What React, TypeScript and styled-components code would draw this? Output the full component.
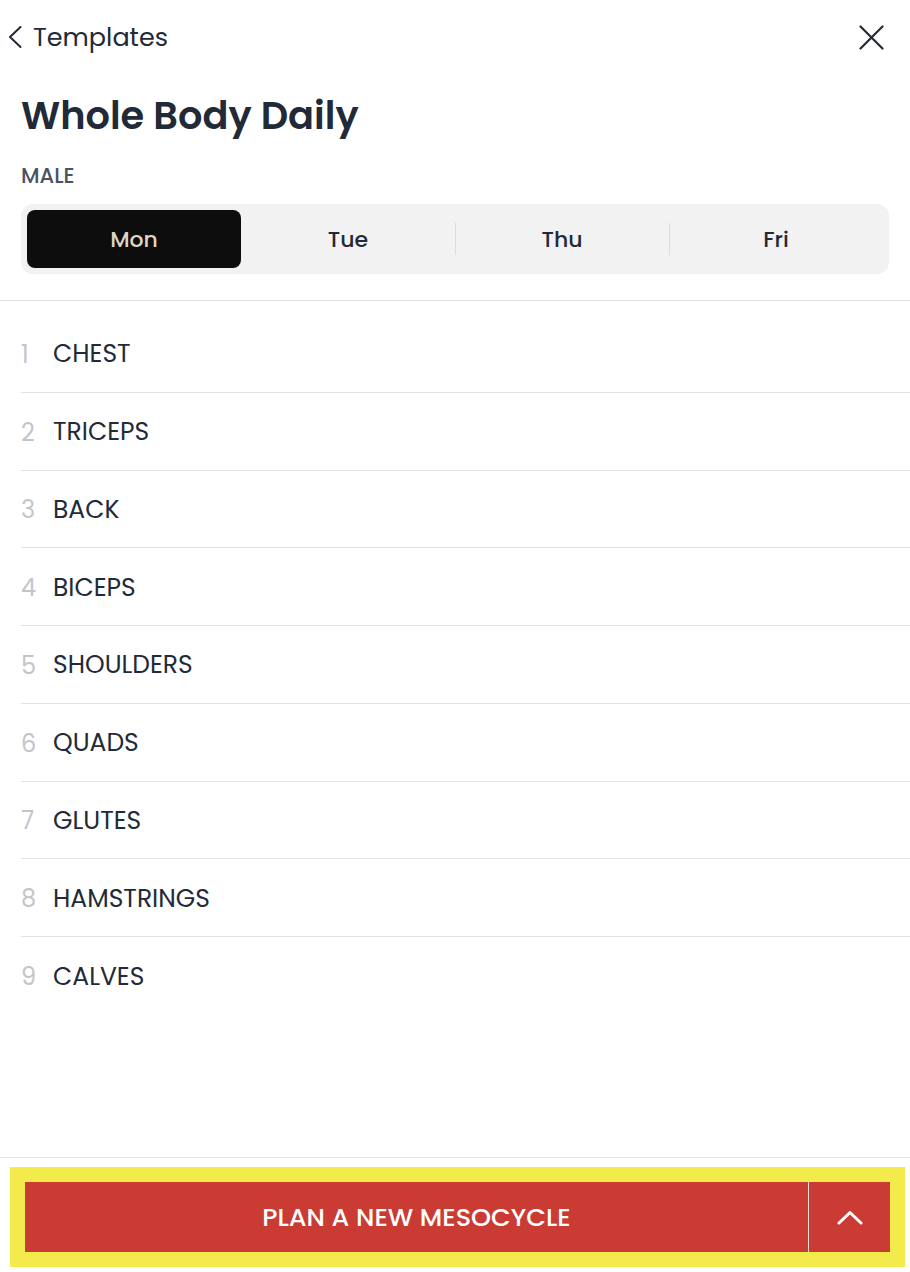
import React from 'react';
import styled, { createGlobalStyle } from 'styled-components';

const GlobalStyle = createGlobalStyle`
  html, body {
    margin: 0;
    padding: 0;
    background: #ffffff;
  }
  body {
    font-family: 'Poppins', 'Inter', 'Open Sans', sans-serif;
    color: #222a38;
  }
  * {
    box-sizing: border-box;
  }
`;

const Page = styled.div`
  display: flex;
  flex-direction: column;
  height: 100vh;
  background: #ffffff;
`;

const TopBar = styled.div`
  display: flex;
  align-items: center;
  justify-content: space-between;
  height: 74px;
  padding: 0 26px 0 8px;
`;

const BackLink = styled.button`
  display: flex;
  align-items: center;
  gap: 11px;
  border: none;
  background: none;
  padding: 0;
  font-family: inherit;
  font-size: 25.5px;
  color: #222a38;
  cursor: pointer;
`;

const IconButton = styled.button`
  display: flex;
  border: none;
  background: none;
  padding: 0;
  cursor: pointer;
`;

const Heading = styled.div`
  padding: 0 21px;
`;

const Title = styled.h1`
  margin: 15px 0 0;
  font-size: 38.3px;
  line-height: 54px;
  font-weight: 600;
  color: #222a38;
`;

const Subtitle = styled.div`
  margin-top: 21px;
  font-size: 21px;
  line-height: 24px;
  font-weight: 500;
  color: #4b5261;
`;

const Tabs = styled.div`
  display: grid;
  grid-template-columns: repeat(4, 1fr);
  align-items: center;
  margin-top: 16px;
  padding: 6px;
  height: 70px;
  background: #f2f2f2;
  border-radius: 12px;
`;

const Tab = styled.div<{ $active: boolean; $divider: boolean }>`
  position: relative;
  display: flex;
  align-items: center;
  justify-content: center;
  height: 100%;
  padding-top: 1px;
  border-radius: 8px;
  font-size: 22px;
  font-weight: 500;
  background: ${({ $active }) => ($active ? '#0d0d0d' : 'transparent')};
  color: ${({ $active }) => ($active ? '#ded4c4' : '#222a38')};

  &::before {
    content: '';
    display: ${({ $divider }) => ($divider ? 'block' : 'none')};
    position: absolute;
    left: 0;
    top: 13px;
    bottom: 13px;
    width: 1px;
    background: #dcdcdc;
  }
`;

const Divider = styled.div`
  margin-top: 26px;
  height: 1px;
  background: #e3e3e3;
`;

const List = styled.div`
  flex: 1;
  padding: 14px 0 0 21px;
`;

const Row = styled.div`
  display: flex;
  align-items: center;
  height: 77.75px;
  padding-top: 2px;
  border-bottom: 1px solid #e3e3e3;

  &:last-child {
    border-bottom: none;
  }
`;

const RowIndex = styled.span`
  width: 32px;
  font-size: 24px;
  color: #c2c5ca;
`;

const RowName = styled.span`
  font-size: 25px;
  color: #222a38;
`;

const Footer = styled.div`
  border-top: 1px solid #e3e3e3;
  padding: 9px 5px 5px 10px;
`;

const Highlight = styled.div`
  display: flex;
  height: 100px;
  padding: 15px;
  background: #f2eb4b;
`;

const MainAction = styled.button`
  flex: 1;
  border: none;
  background: #c93b33;
  color: #ffffff;
  font-family: inherit;
  font-size: 25.5px;
  font-weight: 500;
  cursor: pointer;
`;

const MenuAction = styled.button`
  width: 82px;
  display: flex;
  align-items: center;
  justify-content: center;
  border: none;
  border-left: 1px solid #f1ded9;
  background: #c93b33;
  cursor: pointer;
`;

const muscles = [
  'CHEST',
  'TRICEPS',
  'BACK',
  'BICEPS',
  'SHOULDERS',
  'QUADS',
  'GLUTES',
  'HAMSTRINGS',
  'CALVES',
];

const days = ['Mon', 'Tue', 'Thu', 'Fri'];

export default function App() {
  const activeDay = 0;

  return (
    <>
      <GlobalStyle />
      <Page>
        <TopBar>
          <BackLink>
            <svg width="14" height="22" viewBox="0 0 14 22" fill="none">
              <path d="M12.5 1 L2 11 L12.5 21" stroke="#222a38" strokeWidth="2" strokeLinecap="round" strokeLinejoin="round" />
            </svg>
            Templates
          </BackLink>
          <IconButton>
            <svg width="25" height="25" viewBox="0 0 25 25" fill="none">
              <path d="M1.5 1.5 L23.5 23.5 M23.5 1.5 L1.5 23.5" stroke="#222a38" strokeWidth="2.2" strokeLinecap="round" />
            </svg>
          </IconButton>
        </TopBar>

        <Heading>
          <Title>Whole Body Daily</Title>
          <Subtitle>MALE</Subtitle>
          <Tabs>
            {days.map((day, i) => (
              <Tab
                key={day}
                $active={i === activeDay}
                $divider={i > 0 && i !== activeDay && i - 1 !== activeDay}
              >
                {day}
              </Tab>
            ))}
          </Tabs>
        </Heading>

        <Divider />

        <List>
          {muscles.map((name, i) => (
            <Row key={name}>
              <RowIndex>{i + 1}</RowIndex>
              <RowName>{name}</RowName>
            </Row>
          ))}
        </List>

        <Footer>
          <Highlight>
            <MainAction>PLAN A NEW MESOCYCLE</MainAction>
            <MenuAction>
              <svg width="26" height="15" viewBox="0 0 26 15" fill="none">
                <path d="M2 13 L13 2.5 L24 13" stroke="#ffffff" strokeWidth="3" strokeLinecap="round" strokeLinejoin="round" />
              </svg>
            </MenuAction>
          </Highlight>
        </Footer>
      </Page>
    </>
  );
}
